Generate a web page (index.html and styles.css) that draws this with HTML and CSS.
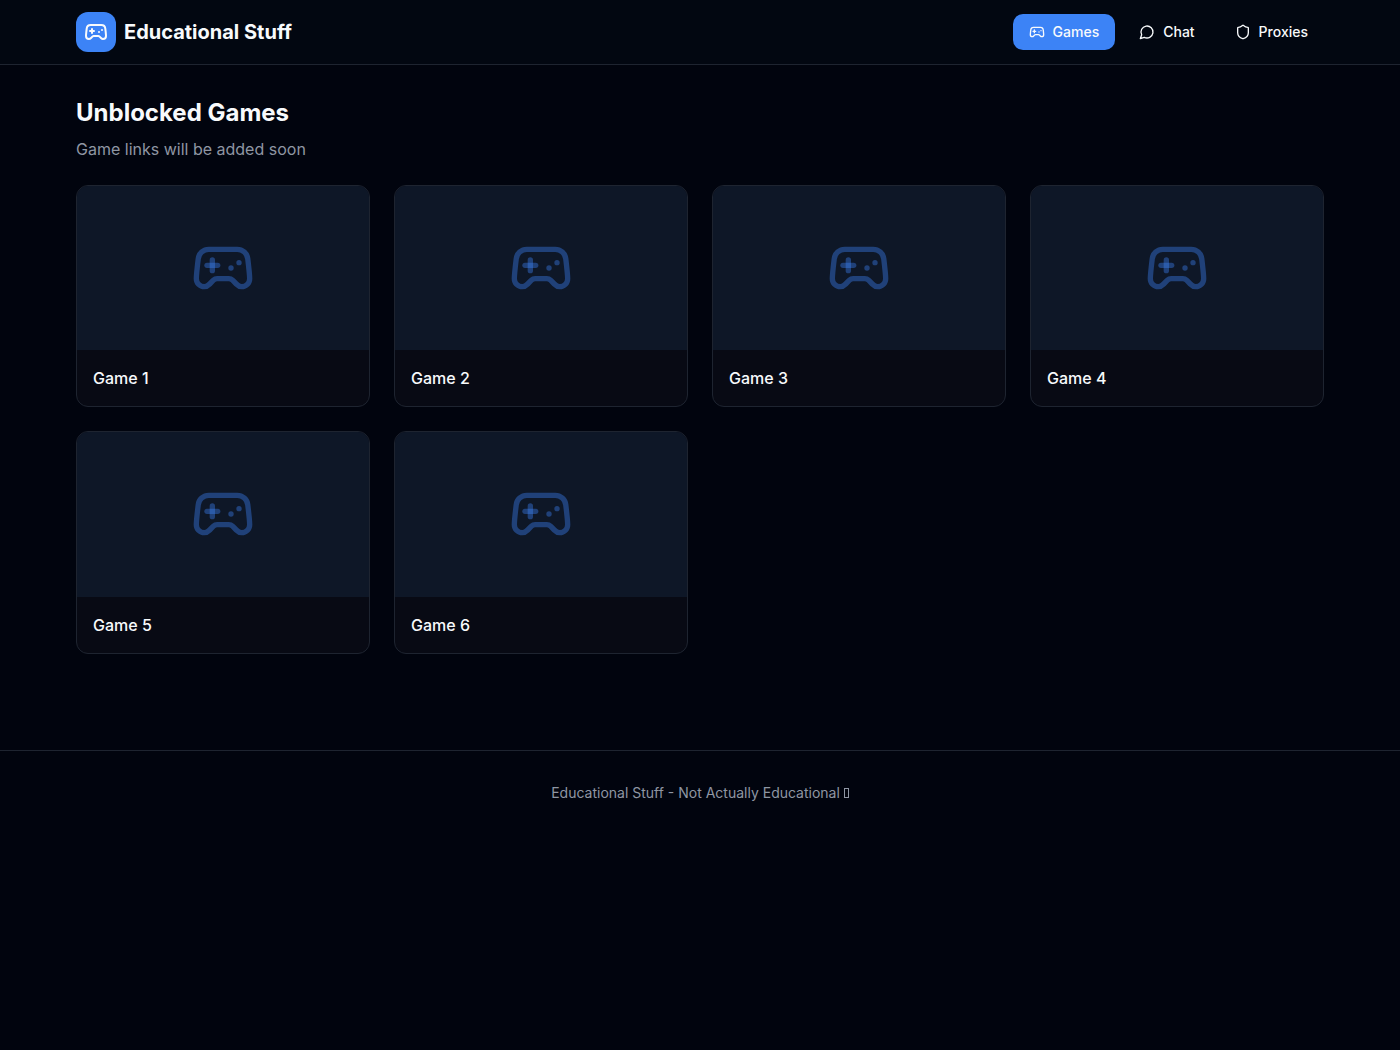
FILE: index.html
```html
<!DOCTYPE html>
<html lang="en">

<head>
    <meta charset="UTF-8">
    <meta name="viewport" content="width=device-width, initial-scale=1.0">
    <title>Educational Stuff</title>
    <link rel="stylesheet" href="styles.css">
</head>

<body>
    <!-- Shared gamepad icon -->
    <svg class="icon-defs" aria-hidden="true">
        <symbol id="gamepad" viewBox="0 0 24 24">
            <line x1="6" x2="10" y1="11" y2="11" />
            <line x1="8" x2="8" y1="9" y2="13" />
            <line x1="15" x2="15.01" y1="12" y2="12" />
            <line x1="18" x2="18.01" y1="10" y2="10" />
            <path d="M17.32 5H6.68a4 4 0 0 0-3.978 3.59c-.006.052-.01.101-.017.152C2.604 9.416 2 14.456 2 16a3 3 0 0 0 3 3c1 0 1.5-.5 2-1l1.414-1.414A2 2 0 0 1 9.828 16h4.344a2 2 0 0 1 1.414.586L17 18c.5.5 1 1 2 1a3 3 0 0 0 3-3c0-1.545-.604-6.584-.685-7.258-.007-.05-.011-.1-.017-.151A4 4 0 0 0 17.32 5z" />
        </symbol>
    </svg>

    <header class="site-header">
        <div class="container header-row">
            <div class="brand">
                <div class="brand-logo">
                    <svg class="icon icon-md" aria-hidden="true"><use href="#gamepad" /></svg>
                </div>
                <span class="brand-name">Educational Stuff</span>
            </div>
            <nav class="nav">
                <a class="nav-link active" href="#games">
                    <svg class="icon icon-sm" aria-hidden="true"><use href="#gamepad" /></svg>
                    Games
                </a>
                <a class="nav-link" href="#chat">
                    <svg class="icon icon-sm" viewBox="0 0 24 24" aria-hidden="true">
                        <path d="M7.9 20A9 9 0 1 0 4 16.1L2 22Z" />
                    </svg>
                    Chat
                </a>
                <a class="nav-link" href="#proxies">
                    <svg class="icon icon-sm" viewBox="0 0 24 24" aria-hidden="true">
                        <path d="M20 13c0 5-3.5 7.5-7.66 8.95a1 1 0 0 1-.67-.01C7.5 20.5 4 18 4 13V6a1 1 0 0 1 1-1c2 0 4.5-1.2 6.24-2.72a1.17 1.17 0 0 1 1.52 0C14.51 3.81 17 5 19 5a1 1 0 0 1 1 1z" />
                    </svg>
                    Proxies
                </a>
            </nav>
        </div>
    </header>

    <main class="container main" id="games">
        <h1>Unblocked Games</h1>
        <p class="subtitle">Game links will be added soon</p>

        <div class="games-grid">
            <article class="game-card">
                <div class="game-thumb"><svg class="icon icon-lg" aria-hidden="true"><use href="#gamepad" /></svg></div>
                <h2 class="game-title">Game 1</h2>
            </article>
            <article class="game-card">
                <div class="game-thumb"><svg class="icon icon-lg" aria-hidden="true"><use href="#gamepad" /></svg></div>
                <h2 class="game-title">Game 2</h2>
            </article>
            <article class="game-card">
                <div class="game-thumb"><svg class="icon icon-lg" aria-hidden="true"><use href="#gamepad" /></svg></div>
                <h2 class="game-title">Game 3</h2>
            </article>
            <article class="game-card">
                <div class="game-thumb"><svg class="icon icon-lg" aria-hidden="true"><use href="#gamepad" /></svg></div>
                <h2 class="game-title">Game 4</h2>
            </article>
            <article class="game-card">
                <div class="game-thumb"><svg class="icon icon-lg" aria-hidden="true"><use href="#gamepad" /></svg></div>
                <h2 class="game-title">Game 5</h2>
            </article>
            <article class="game-card">
                <div class="game-thumb"><svg class="icon icon-lg" aria-hidden="true"><use href="#gamepad" /></svg></div>
                <h2 class="game-title">Game 6</h2>
            </article>
        </div>
    </main>

    <footer class="site-footer">
        <p class="container">Educational Stuff - Not Actually Educational <span class="footer-mark" aria-hidden="true"></span></p>
    </footer>
</body>

</html>
```
FILE: styles.css
```css
* {
    box-sizing: border-box;
    margin: 0;
}

body {
    font-family: Inter, sans-serif;
    font-size: 16px;
    line-height: 24px;
    background-color: #01040e;
    color: #f8fafc;
}

.container {
    width: 100%;
    max-width: 1280px;
    margin: 0 auto;
    padding: 0 16px;
}

/* Icons */
.icon-defs {
    display: none;
}

.icon {
    flex-shrink: 0;
    fill: none;
    stroke: currentColor;
    stroke-width: 2;
    stroke-linecap: round;
    stroke-linejoin: round;
}

.icon-sm {
    width: 16px;
    height: 16px;
}

.icon-md {
    width: 24px;
    height: 24px;
}

.icon-lg {
    width: 64px;
    height: 64px;
    color: rgba(60, 131, 246, 0.4);
}

/* Header */
.site-header {
    background-color: #020711;
    border-bottom: 1px solid #1e2430;
}

.header-row {
    display: flex;
    align-items: center;
    justify-content: space-between;
    height: 64px;
}

.brand {
    display: flex;
    align-items: center;
    gap: 8px;
}

.brand-logo {
    display: flex;
    align-items: center;
    justify-content: center;
    width: 40px;
    height: 40px;
    border-radius: 12px;
    background-color: #3c83f6;
}

.brand-name {
    font-size: 20px;
    font-weight: 700;
    line-height: 28px;
}

.nav {
    display: flex;
    gap: 8px;
}

.nav-link {
    display: flex;
    align-items: center;
    gap: 8px;
    padding: 8px 16px;
    border-radius: 10px;
    color: #f8fafc;
    font-size: 14px;
    font-weight: 500;
    line-height: 20px;
    text-decoration: none;
}

.nav-link.active {
    background-color: #3c83f6;
}

/* Games */
.main {
    padding-top: 32px;
    padding-bottom: 32px;
}

h1 {
    margin-bottom: 8px;
    font-size: 24px;
    font-weight: 700;
    line-height: 32px;
}

.subtitle {
    margin-bottom: 24px;
    color: #8f96a3;
}

.games-grid {
    display: grid;
    grid-template-columns: repeat(auto-fill, minmax(260px, 1fr));
    gap: 24px;
}

.game-card {
    overflow: hidden;
    border: 1px solid #1e2430;
    border-radius: 12px;
    background-color: #080a14;
}

.game-thumb {
    display: flex;
    align-items: center;
    justify-content: center;
    aspect-ratio: 16 / 9;
    background-color: #0e1727;
}

.game-title {
    padding: 16px;
    font-size: 16px;
    font-weight: 500;
    line-height: 24px;
}

/* Footer */
.site-footer {
    margin-top: 64px;
    padding: 32px 0;
    border-top: 1px solid #1e2430;
    color: #8f96a3;
    font-size: 14px;
    line-height: 20px;
    text-align: center;
}

.footer-mark {
    display: inline-block;
    width: 5px;
    height: 10px;
    border: 1px solid currentColor;
    vertical-align: baseline;
}
```
